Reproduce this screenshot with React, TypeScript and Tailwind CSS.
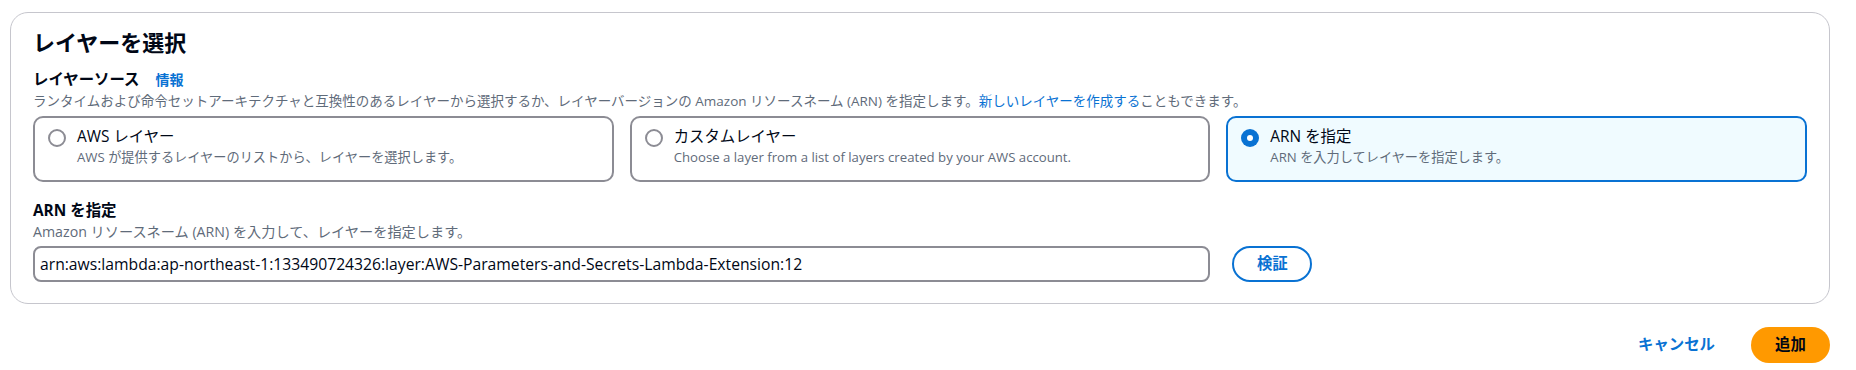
import { useState } from 'react'

const font = { fontFamily: '"Open Sans", "Noto Sans CJK JP", sans-serif' }

type Source = 'aws' | 'custom' | 'arn'

const tiles: { id: Source; title: string; description: string }[] = [
  { id: 'aws', title: 'AWS レイヤー', description: 'AWS が提供するレイヤーのリストから、レイヤーを選択します。' },
  {
    id: 'custom',
    title: 'カスタムレイヤー',
    description: 'Choose a layer from a list of layers created by your AWS account.',
  },
  { id: 'arn', title: 'ARN を指定', description: 'ARN を入力してレイヤーを指定します。' },
]

function Radio({ checked }: { checked: boolean }) {
  if (checked) {
    return (
      <span className="mt-[2px] flex h-[18px] w-[18px] shrink-0 items-center justify-center rounded-full bg-[#0972d3]">
        <span className="h-[6px] w-[6px] rounded-full bg-white" />
      </span>
    )
  }
  return <span className="mt-[2px] h-[18px] w-[18px] shrink-0 rounded-full border-2 border-[#8c8c94] bg-white" />
}

export default function App() {
  const [source, setSource] = useState<Source>('arn')
  const [arn, setArn] = useState(
    'arn:aws:lambda:ap-northeast-1:133490724326:layer:AWS-Parameters-and-Secrets-Lambda-Extension:12'
  )

  return (
    <div style={font} className="min-h-[370px] bg-white pl-[10px] pr-[26px] pt-[12px] text-[#000716]">
      {/* Container */}
      <div className="rounded-[18px] border border-[#c6c6cd] px-[22px] pb-[21px] pt-[16px]">
        <h2 className="text-[22px] font-bold leading-[26px]">レイヤーを選択</h2>

        {/* Layer source */}
        <div className="mt-[15px]">
          <div className="flex items-center gap-[16px] text-[15.4px] font-bold leading-[20px]">
            <span>レイヤーソース</span>
            <a className="text-[14px] text-[#0972d3]">情報</a>
          </div>
          <p className="mt-[2px] text-[13.5px] leading-[18px] text-[#5f6b7a]">
            ランタイムおよび命令セットアーキテクチャと互換性のあるレイヤーから選択するか、レイヤーバージョンの Amazon
            リソースネーム (ARN) を指定します。
            <a className="text-[#0972d3]">新しいレイヤーを作成する</a>
            こともできます。
          </p>

          <div className="mt-[6px] grid grid-cols-3 gap-[16px]">
            {tiles.map((tile) => {
              const checked = source === tile.id
              return (
                <button
                  key={tile.id}
                  type="button"
                  onClick={() => setSource(tile.id)}
                  className={`flex h-[66px] items-start gap-[11px] rounded-[10px] border-2 px-[13px] pt-[9px] text-left ${
                    checked ? 'border-[#0972d3] bg-[#f0fbff]' : 'border-[#8c8c94] bg-white'
                  }`}
                >
                  <Radio checked={checked} />
                  <div>
                    <div className="text-[15.4px] leading-[20px]">{tile.title}</div>
                    <div className="mt-[1px] text-[13.2px] leading-[18px] text-[#5f6b7a]">{tile.description}</div>
                  </div>
                </button>
              )
            })}
          </div>
        </div>

        {/* ARN */}
        <div className="mt-[19px]">
          <div className="text-[15.4px] font-bold leading-[20px]">ARN を指定</div>
          <p className="mt-[2px] text-[14.2px] leading-[18px] text-[#5f6b7a]">
            Amazon リソースネーム (ARN) を入力して、レイヤーを指定します。
          </p>
          <div className="mt-[5px] grid grid-cols-3 gap-[16px]">
            <input
              value={arn}
              onChange={(e) => setArn(e.target.value)}
              className="col-span-2 h-[36px] rounded-[8px] border-2 border-[#8c8c94] px-[5px] text-[15.7px] text-[#000716] outline-none"
            />
            <div className="pl-[6px]">
              <button
                type="button"
                className="h-[36px] w-[80px] rounded-full border-2 border-[#0972d3] bg-white text-[15.4px] font-bold text-[#0972d3]"
              >
                検証
              </button>
            </div>
          </div>
        </div>
      </div>

      {/* Actions */}
      <div className="mt-[23px] flex items-center justify-end gap-[36px]">
        <button type="button" className="text-[15.4px] font-bold text-[#0972d3]">
          キャンセル
        </button>
        <button
          type="button"
          className="h-[36px] w-[79px] rounded-full bg-[#ff9900] text-[15.4px] font-bold text-[#000716]"
        >
          追加
        </button>
      </div>
    </div>
  )
}
